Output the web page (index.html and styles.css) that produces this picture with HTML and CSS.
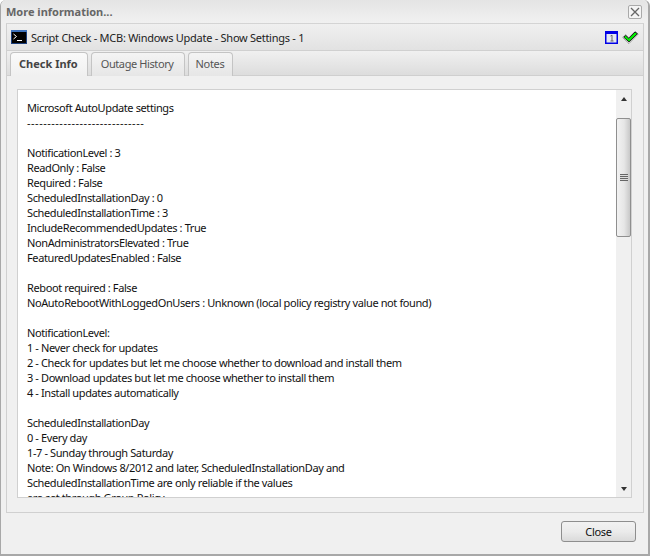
FILE: index.html
```html
<!DOCTYPE html>
<html lang="en">
<head>
<meta charset="utf-8">
<title>More information...</title>
<link rel="stylesheet" href="styles.css">
</head>
<body>
<div class="window">
  <div class="titlebar">
    <span class="title">More information...</span>
    <button class="close-x" aria-label="Close">
      <svg width="10" height="10" viewBox="0 0 10 10"><path d="M1 1L9 9M9 1L1 9" stroke="#666" stroke-width="1.3" fill="none"/></svg>
    </button>
  </div>
  <div class="panel">
    <div class="header">
      <svg class="term" width="16" height="14" viewBox="0 0 16 14"><rect x="0" y="0" width="16" height="14" fill="#1c3f7c"/><rect x="0" y="0" width="16" height="2" fill="#3f73bd"/><rect x="1" y="2" width="14" height="11" fill="#000"/><path d="M2.5 4L5.5 6.5L2.5 9" stroke="#fff" stroke-width="1" fill="none"/><rect x="6" y="10" width="5" height="1" fill="#fff"/></svg>
      <span class="check-name">Script Check - MCB: Windows Update - Show Settings - 1</span>
      <span class="status">
        <svg width="13" height="13" viewBox="0 0 13 13"><rect x="0" y="0" width="13" height="13" fill="#0000e6"/><rect x="1.5" y="3" width="10" height="8.5" fill="#e4e8f0"/><path d="M5.5 5L7 4.200V10M5.500 10H8.500" stroke="#666" stroke-width="1" fill="none"/></svg>
        <svg width="17" height="14" viewBox="0 0 17 14"><path d="M.8 7.500L3.500 4.800L6.800 7.800L13 1.500L16.200 4L7 13.500Z" fill="#fff" stroke="#555" stroke-width=".6"/><path d="M1.800 7.200L3.600 5.400L6.800 8.400L13 2L15.300 3.800L7 11.900Z" fill="#00f000" stroke="#111" stroke-width=".9" stroke-linejoin="round"/></svg>
      </span>
    </div>
    <div class="tabs">
      <div class="tab active">Check Info</div>
      <div class="tab outage">Outage History</div>
      <div class="tab notes">Notes</div>
    </div>
    <div class="body">
      <div class="textbox">
        <pre class="text">Microsoft AutoUpdate settings
<span class="rule">-----------------------------</span>

NotificationLevel : 3
ReadOnly : False
Required : False
ScheduledInstallationDay : 0
ScheduledInstallationTime : 3
IncludeRecommendedUpdates : True
NonAdministratorsElevated : True
FeaturedUpdatesEnabled : False

Reboot required : False
NoAutoRebootWithLoggedOnUsers : Unknown (local policy registry value not found)

NotificationLevel:
1 - Never check for updates
2 - Check for updates but let me choose whether to download and install them
3 - Download updates but let me choose whether to install them
4 - Install updates automatically

ScheduledInstallationDay
0 - Every day
1-7 - Sunday through Saturday
Note: On Windows 8/2012 and later, ScheduledInstallationDay and
ScheduledInstallationTime are only reliable if the values
are set through Group Policy.</pre>
        <div class="scrollbar">
          <div class="arrow up"></div>
          <div class="track">
            <div class="thumb"><div class="grip"></div></div>
          </div>
          <div class="arrow down"></div>
        </div>
      </div>
    </div>
  </div>
  <div class="footer">
    <button class="close-btn">Close</button>
  </div>
</div>
</body>
</html>
```

FILE: styles.css
```css
* { box-sizing: border-box; }
html, body { margin: 0; padding: 0; background: #fff; }
body { width: 650px; height: 556px; overflow: hidden; font-family: "Noto Sans", "DejaVu Sans", sans-serif; font-size: 11px; color: #111; }
.window {
  width: 650px; height: 556px;
  background: #f0f0f0;
  border: 2px solid #a8a8a8; border-top: 0; border-left-width: 1px;
  border-radius: 6px 6px 0 0;
  display: flex; flex-direction: column;
  padding: 0 4px 0 5px;
}
.titlebar {
  height: 23px; flex: none;
  display: flex; align-items: center; justify-content: space-between;
  background: linear-gradient(#e4e4e4, #f1f1f1);
  margin: 0 -4px 0 -5px; padding: 0 6px 0 5px;
  border-radius: 6px 6px 0 0;
}
.title { font-weight: 700; font-size: 11px; color: #666; }
.close-x {
  width: 14px; height: 14px; padding: 0; margin: 0;
  display: flex; align-items: center; justify-content: center;
  background: #f4f4f4; border: 1px solid #aaa; border-radius: 2px;
}
.panel {
  flex: none; height: 490px;
  border: 1px solid #d0d0d0; border-top-color: #d4d4d4;
  display: flex; flex-direction: column;
  background: #f0f0f0;
}
.header {
  height: 27px; flex: none;
  display: flex; align-items: center; gap: 4px;
  padding: 0 4px 0 4px;
  background: linear-gradient(#f0f0f0, #e2e2e2);
  border-bottom: 1px solid #d0d0d0;
}
.check-name { font-size: 11px; color: #222; letter-spacing: -0.27px; }
.status { margin-left: auto; display: flex; align-items: center; gap: 4px; }
.status svg { display: block; }
.term { display: block; }
.tabs {
  height: 28px; flex: none;
  display: flex; align-items: flex-start; gap: 3px;
  padding: 1px 0 0 3px;
  background: linear-gradient(#f0f0f0, #dcdcdc);
  border-bottom: 3px solid #f0f0f0;
  box-shadow: inset 0 -1px 0 #cfcfcf;
}
.tab {
  height: 24px;
  padding: 0 10px 2px 9px;
  display: flex; align-items: center;
  color: #555; font-size: 11px; letter-spacing: -0.4px;
  background: linear-gradient(#f4f4f4, #e6e6e6);
  border: 1px solid #c4c4c4; border-bottom: 0;
  border-radius: 4px 4px 0 0;
}
.tab.notes { padding-left: 7px; padding-right: 8px; letter-spacing: -0.3px; }
.tab.active {
  padding-left: 8px; padding-right: 9px;
  background: linear-gradient(#fafafa, #f0f0f0);
  font-weight: 700; color: #444; letter-spacing: 0;
}
.body { flex: 1; padding: 10px 11px 14px 10px; min-height: 0; }
.textbox {
  height: 100%;
  background: #fff;
  border: 1px solid #d0d0d0;
  display: flex; overflow: hidden;
}
.text {
  flex: 1; margin: 0; padding: 10px 0 0 9px; overflow: hidden;
  font-family: "Noto Sans", "DejaVu Sans", sans-serif;
  font-size: 11px; line-height: 15px; color: #111; letter-spacing: -0.39px;
}
.rule { letter-spacing: 0.5px; }
.scrollbar {
  width: 15px; flex: none;
  display: flex; flex-direction: column;
  background: #f0f0f0;
}
.arrow { height: 17px; flex: none; display: flex; align-items: center; justify-content: center; }
.arrow::before { content: ""; border-left: 3px solid transparent; border-right: 3px solid transparent; }
.arrow.up::before { border-bottom: 4px solid #333; }
.arrow.down::before { border-top: 4px solid #333; }
.track { flex: 1; padding-top: 11px; }
.thumb {
  height: 119px; width: 15px;
  border: 1px solid #8f8f8f; border-radius: 2px;
  background: linear-gradient(90deg, #f2f2f2, #e6e6e6 55%, #c8c8c8);
  display: flex; align-items: center; justify-content: center;
}
.grip { width: 8px; height: 7px; background: repeating-linear-gradient(#666 0 1px, #ddd 1px 2px); }
.footer { flex: 1; display: flex; align-items: flex-start; justify-content: flex-end; padding: 8px 8px 0 0; }
.close-btn {
  width: 75px; height: 21px; padding: 0;
  font-family: "Noto Sans", "DejaVu Sans", sans-serif; font-size: 11px; color: #111; letter-spacing: -0.3px;
  background: linear-gradient(#f2f2f2, #ebebeb 50%, #dadada);
  border: 1px solid #8e8e8e; border-radius: 3px;
}
```
